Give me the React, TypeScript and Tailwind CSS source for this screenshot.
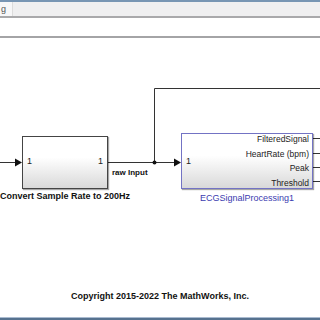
import React from 'react';

const font = { fontFamily: '"Liberation Sans", Arial, sans-serif' };

const Block: React.FC<{
  className: string;
  border: string;
  children?: React.ReactNode;
}> = ({ className, border, children }) => (
  <div
    className={`absolute border ${border} bg-gradient-to-b from-white from-40% to-[#d9d9d9] shadow-[1px_1px_1px_rgba(0,0,0,0.35)] ${className}`}
  >
    {children}
  </div>
);

export default function App() {
  return (
    <div className="w-[320px] h-[320px] bg-white flex flex-col overflow-hidden" style={font}>
      {/* window title strip */}
      <div className="h-[2px] bg-[#7795b3]" />

      {/* tab strip */}
      <div className="h-[16px] bg-[#efeff0] flex border-b-2 border-[#a9a9ab]">
        <div className="w-[13px] bg-[#f7f7f8] border-r border-[#dcdcdc] flex items-center justify-start pl-[1px] text-[9px] text-[#555] leading-none">
          g
        </div>
      </div>

      {/* address bar */}
      <div className="h-[20px] bg-white border-b-2 border-[#a4a4a6]" />

      {/* model canvas */}
      <div className="relative flex-1 bg-white">
        <svg className="absolute inset-0" width="320" height="277" viewBox="0 0 320 277">
          <g stroke="#333" strokeWidth="1" fill="none">
            <line x1="0" y1="124.5" x2="17" y2="124.5" />
            <line x1="107" y1="124.5" x2="176" y2="124.5" />
            <polyline points="154.5,124.5 154.5,50.5 320,50.5" />
            <line x1="312" y1="100.5" x2="320" y2="100.5" />
            <line x1="312" y1="115.5" x2="320" y2="115.5" />
            <line x1="312" y1="129.5" x2="320" y2="129.5" />
            <line x1="312" y1="143.5" x2="320" y2="143.5" />
          </g>
          <polygon points="15,120.5 22,124.5 15,128.5" fill="#111" />
          <polygon points="174,120.5 181,124.5 174,128.5" fill="#111" />
          <circle cx="154.5" cy="124.5" r="2" fill="#111" />
        </svg>

        <Block className="left-[22px] top-[98px] w-[86px] h-[53px]" border="border-[#444]">
          <span className="absolute left-[4px] top-[20px] text-[9px] leading-none text-[#222]">1</span>
          <span className="absolute right-[4px] top-[20px] text-[9px] leading-none text-[#222]">1</span>
        </Block>
        <div className="absolute left-0 top-[154px] w-[129px] text-center text-[9px] font-bold leading-none text-[#111] whitespace-nowrap">
          Convert Sample Rate to 200Hz
        </div>
        <div className="absolute left-[112px] top-[131px] text-[8px] font-bold leading-none text-[#111]">
          raw Input
        </div>

        <Block className="left-[181px] top-[95px] w-[132px] h-[56px]" border="border-[#7373c4]">
          <span className="absolute left-[4px] top-[23px] text-[9px] leading-none text-[#222]">1</span>
          <div className="absolute right-[3px] top-[0px] flex flex-col items-end gap-[4.5px] text-[8.5px] leading-[10px] text-[#222]">
            <span>FilteredSignal</span>
            <span>HeartRate (bpm)</span>
            <span>Peak</span>
            <span>Threshold</span>
          </div>
        </Block>
        <div className="absolute left-[181px] top-[156px] w-[132px] text-center text-[9px] leading-none text-[#3b3bb0] whitespace-nowrap">
          ECGSignalProcessing1
        </div>

        <div className="absolute left-0 right-0 top-[254px] text-center text-[9px] font-bold leading-none text-[#111]">
          Copyright 2015-2022 The MathWorks, Inc.
        </div>
      </div>

      {/* status bar */}
      <div className="h-[3px] bg-[#56728f] border-t border-[#aabbd0]" />
    </div>
  );
}
